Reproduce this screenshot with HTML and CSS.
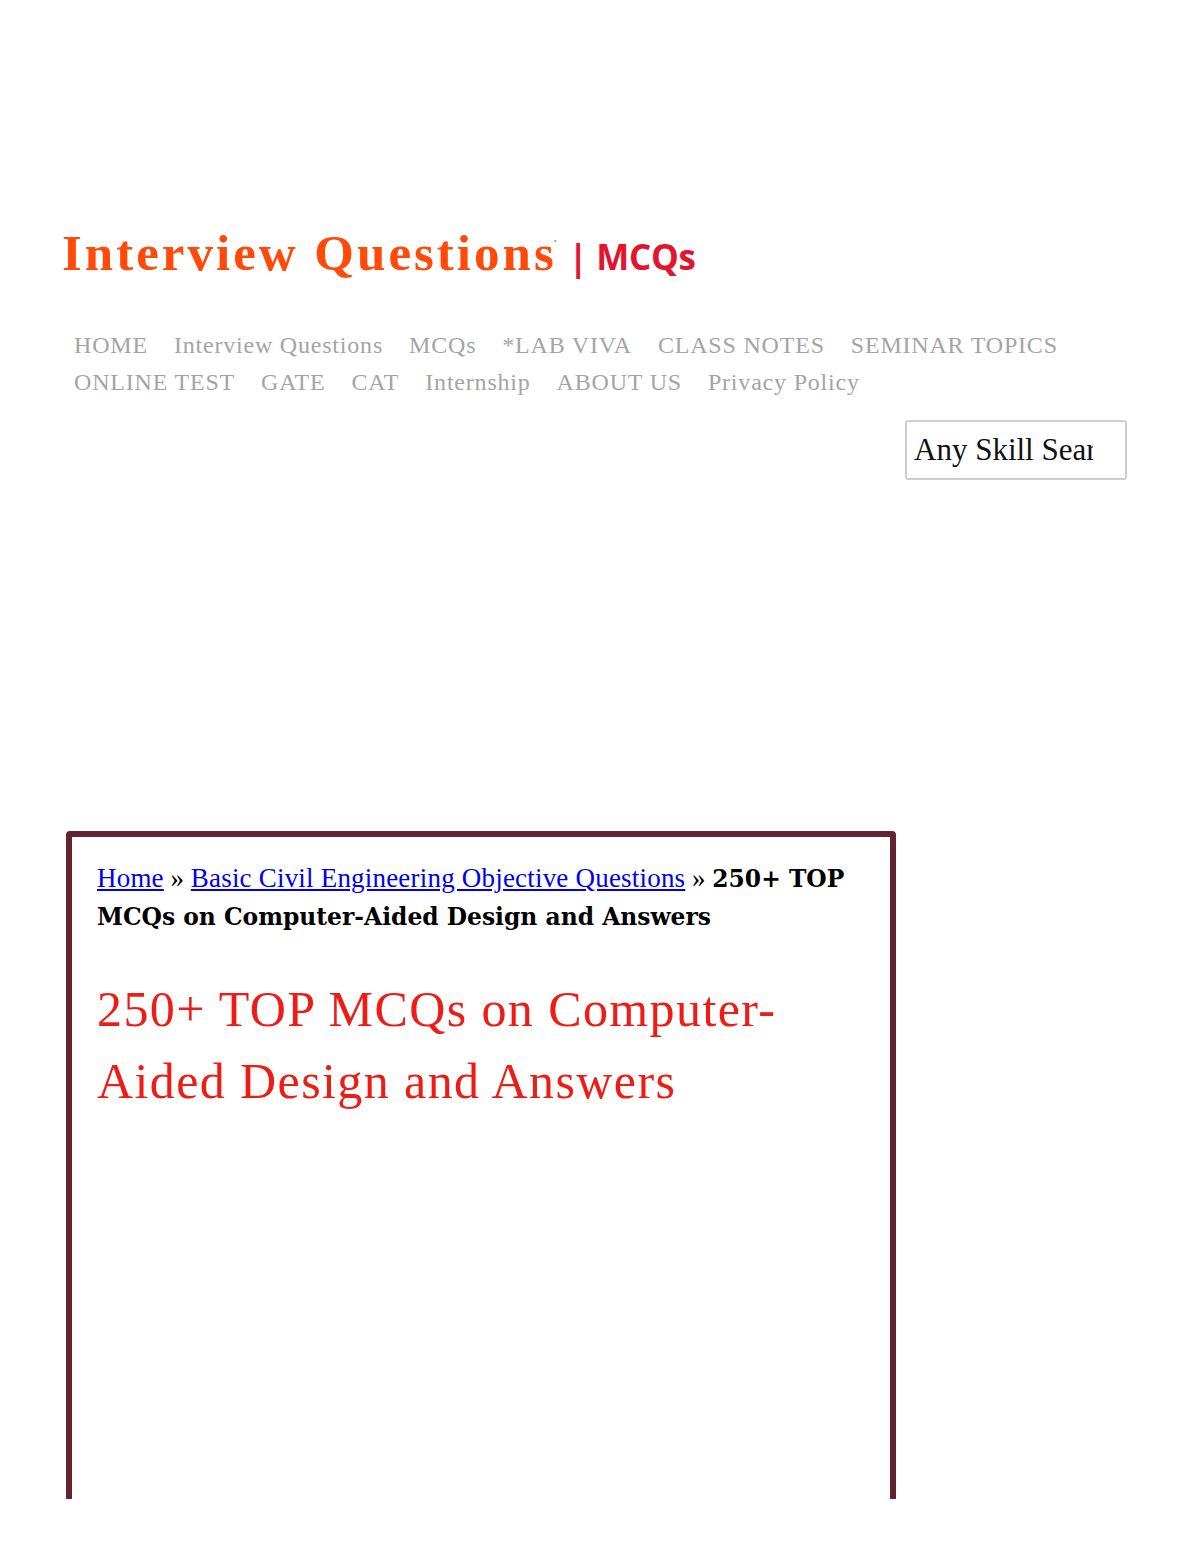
FILE: index.html
```html
<!DOCTYPE html>
<html>
<head>
<meta charset="utf-8">
<link rel="stylesheet" href="styles.css">
</head>
<body>
<div class="page">
  <header class="header">
    <div class="logo">
      <span class="logo-main">Interview Questions</span><span class="logo-dot">•</span>
      <span class="logo-sub">| MCQs</span>
    </div>
    <nav class="nav">
      <a>HOME</a><a>Interview Questions</a><a>MCQs</a><a>*LAB VIVA</a><a>CLASS NOTES</a><a>SEMINAR TOPICS</a>
      <a>ONLINE TEST</a><a>GATE</a><a>CAT</a><a>Internship</a><a>ABOUT US</a><a>Privacy Policy</a>
    </nav>
    <div class="search-row">
      <input class="search" type="text" value="Any Skill Search">
    </div>
  </header>
  <div class="ad-space"></div>
  <main class="main">
    <article class="post">
      <div class="crumbs"><a class="link">Home</a> » <a class="link">Basic Civil Engineering Objective Questions</a> » <strong>250+ TOP MCQs on Computer-Aided Design and Answers</strong></div>
      <h1 class="title">250+ TOP MCQs on Computer-Aided Design and Answers</h1>
    </article>
  </main>
</div>
</body>
</html>
```
FILE: styles.css
```css
html, body { margin: 0; padding: 0; background: #fff; }
body { font-family: "Liberation Serif", serif; }
.page { width: 1200px; height: 1553px; overflow: hidden; }
.header { padding: 223px 0 0 62px; }
.logo { display: flex; align-items: baseline; height: 60px; }
.logo-main { font-family: "Liberation Serif", serif; font-weight: bold; font-size: 51px; line-height: 60px; color: #ff4a0a; letter-spacing: 3px; }
.logo-dot { font-size: 8px; line-height: 60px; color: #999; position: relative; top: -26px; margin-left: -3px; margin-right: 12px; }
.logo-sub { font-family: "Open Sans", sans-serif; font-weight: bold; font-size: 35px; line-height: 60px; color: #e2142e; letter-spacing: -0.3px; }
.nav { margin: 44px 0 0 12px; width: 1030px; display: flex; flex-wrap: wrap; column-gap: 26px; font-size: 24px; line-height: 37px; color: #a4a4a4; letter-spacing: 0.8px; }
.nav a { white-space: nowrap; }
.search-row { display: flex; justify-content: flex-end; padding-right: 73px; margin-top: 19px; }
.search { width: 222px; height: 60px; box-sizing: border-box; border: 2px solid #cfcfcf; border-radius: 3px; padding: 0 32px 0 7px; font-family: "Liberation Serif", serif; font-size: 31px; color: #111; outline: none; }
.ad-space { height: 351px; }
.main { padding-left: 66px; height: 668px; overflow: hidden; }
.post { width: 830px; height: 900px; box-sizing: border-box; border: 6px solid #62242f; border-radius: 4px; padding: 23px 25px; }
.crumbs { font-size: 27px; line-height: 37px; color: #000; }
.crumbs .link { color: #0000ee; text-decoration: underline; letter-spacing: 0.2px; }
.crumbs strong { font-family: "DejaVu Serif", serif; font-weight: bold; font-size: 23.4px; line-height: 37px; }
.title { margin: 37px 0 0; font-weight: normal; font-size: 50px; line-height: 72px; color: #ee1c14; letter-spacing: 1.4px; }
```
